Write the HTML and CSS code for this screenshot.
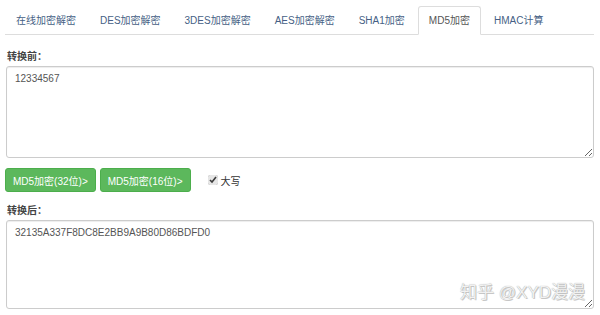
FILE: index.html
```html
<!DOCTYPE html>
<html lang="zh">

<head>
    <meta charset="UTF-8">
    <meta name="viewport" content="width=device-width, initial-scale=1.0">
    <title>MD5加密</title>
    <link rel="stylesheet" href="styles.css">
</head>

<body>

    <div class="container">
        <ul class="nav-tabs">
            <li><a href="#">在线加密解密</a></li>
            <li><a href="#">DES加密解密</a></li>
            <li><a href="#">3DES加密解密</a></li>
            <li><a href="#">AES加密解密</a></li>
            <li><a href="#">SHA1加密</a></li>
            <li class="active"><a href="#">MD5加密</a></li>
            <li><a href="#">HMAC计算</a></li>
        </ul>

        <div class="form-group first">
            <label for="before">转换前：</label>
            <textarea id="before" class="form-control before">12334567</textarea>
        </div>

        <div class="actions">
            <button class="btn btn-success">MD5加密(32位)&gt;</button>
            <button class="btn btn-success">MD5加密(16位)&gt;</button>
            <label class="check"><input type="checkbox" checked> 大写</label>
        </div>

        <div class="form-group">
            <label for="after">转换后：</label>
            <textarea id="after" class="form-control after">32135A337F8DC8E2BB9A9B80D86BDFD0</textarea>
        </div>

        <!-- 水印 -->
        <div class="watermark">知乎 @XYD漫漫</div>
    </div>

</body>

</html>
```

FILE: styles.css
```css
body {
    font-family: "Liberation Sans", Arial, "Noto Sans CJK SC", sans-serif;
    font-size: 10px;
    margin: 0;
    padding: 0;
    background-color: #fff;
    color: #333;
    height: 315px;
    overflow: hidden;
}

.container {
    position: relative;
    padding: 6px 6px 0 5px;
    height: 309px;
}

.nav-tabs {
    list-style: none;
    margin: 0;
    padding: 0;
    display: flex;
    border-bottom: 1px solid #ddd;
}

.nav-tabs li {
    margin-right: 2px;
    margin-bottom: -1px;
}

.nav-tabs a {
    display: block;
    padding: 0 10px;
    height: 27px;
    line-height: 27px;
    border: 1px solid transparent;
    border-radius: 3px 3px 0 0;
    color: #465f85;
    text-decoration: none;
}

.nav-tabs .active a {
    color: #555;
    background-color: #fff;
    border-color: #ddd;
    border-bottom-color: #fff;
}

.form-group {
    padding-left: 1px;
}

.form-group.first {
    margin-top: 15px;
}

.form-group label {
    display: block;
    font-weight: bold;
    color: #444;
    line-height: 14px;
    margin-bottom: 2px;
    padding-left: 1px;
}

.form-control {
    display: block;
    width: 100%;
    box-sizing: border-box;
    font-family: "Liberation Sans", Arial, "Noto Sans CJK SC", sans-serif;
    font-size: 10px;
    color: #555;
    padding: 6px 8px;
    border: 1px solid #ccc;
    border-radius: 3px;
    box-shadow: inset 0 1px 1px rgba(0, 0, 0, 0.075);
    resize: vertical;
}

.before {
    height: 92px;
}

.after {
    height: 89px;
}

.actions {
    display: flex;
    align-items: center;
    margin: 10px 0 12px 0;
}

.btn {
    height: 24px;
    padding: 0 7px;
    margin-right: 4px;
    font-family: "Liberation Sans", Arial, "Noto Sans CJK SC", sans-serif;
    font-size: 10px;
    border-radius: 3px;
    cursor: pointer;
}

.btn-success {
    color: #fff;
    background-color: #5cb85c;
    border: 1px solid #4cae4c;
}

.check {
    display: flex;
    align-items: center;
    margin-left: 13px;
    font-size: 10px;
    color: #333;
}

.check input {
    width: 10px;
    height: 10px;
    margin: 0 3px 0 0;
    accent-color: #e6e6e6;
}

.watermark {
    position: absolute;
    right: 15px;
    top: 278px;
    font-size: 17px;
    color: #f2f2f2;
    text-shadow: 0 0 1px #999, 1px 1px 0 #ccc;
}
```
